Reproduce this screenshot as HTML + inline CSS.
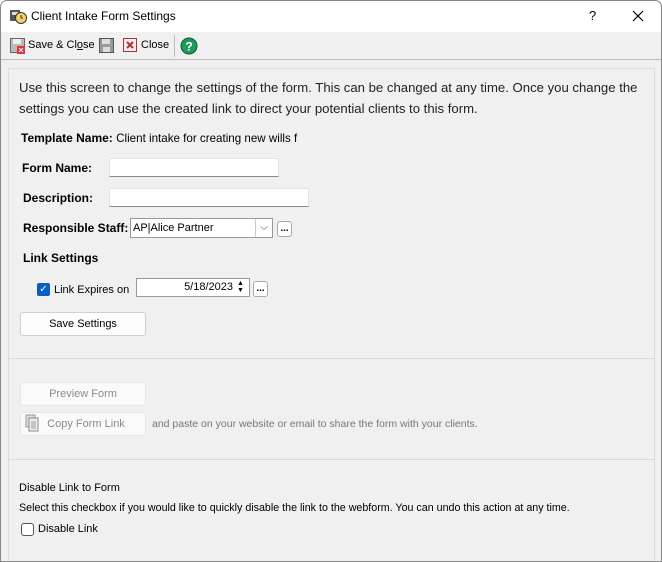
<!DOCTYPE html>
<html><head><style>
*{box-sizing:border-box;margin:0;padding:0}
body{width:662px;height:562px;overflow:hidden;background:#f0f0f0;font-family:"Liberation Sans",sans-serif;font-size:12px;color:#000;position:relative}
.a{position:absolute;white-space:nowrap}
.b{font-weight:bold;font-size:12px}
.inp{position:absolute;background:#fff;border:1px solid #e3e3e3;border-bottom-color:#8a8a8a}
.btn{position:absolute;background:#fdfdfd;border:1px solid #d0d0d0;border-radius:3px;text-align:center;font-size:11px}
.dis{color:#8a8a8a;background:#fafafa;border-color:#e5e5e5}
.dots{position:absolute;width:15px;height:16px;border:1px solid #aaa;border-radius:3px;background:#fff;font-size:10px;text-align:center;line-height:13px;font-weight:bold}
</style></head><body>
<div class="a" style="left:0;top:0;width:662px;height:32px;background:#fff"></div>
<div class="a" style="left:0;top:0;width:662px;height:562px;border:1px solid #888;border-radius:7px 7px 0 0;pointer-events:none;z-index:5"></div>
<svg class="a" style="left:9px;top:7px" width="18" height="18"><rect x="1" y="3" width="10" height="11" fill="#555"/><rect x="3" y="5" width="6" height="3" fill="#ddd"/><circle cx="12" cy="11" r="5.5" fill="#f3d36a" stroke="#333"/><path d="M12 8v3h2" stroke="#333" fill="none"/></svg>
<div class="a" style="left:31px;top:9px;font-size:12px">Client Intake Form Settings</div>
<div class="a" style="left:589px;top:8px;font-size:13px">?</div>
<svg class="a" style="left:632px;top:10px" width="12" height="12"><path d="M1 1l10 10M11 1l-10 10" stroke="#000" stroke-width="1.2"/></svg>
<div class="a" style="left:0;top:32px;width:662px;height:28px;background:#f0f0f0;border-bottom:1px solid #bbb"></div>
<svg class="a" style="left:10px;top:38px" width="16" height="16"><rect x="0.5" y="0.5" width="14" height="14" fill="#bbb" stroke="#666"/><rect x="3" y="1" width="8" height="5" fill="#eee"/><rect x="7" y="8" width="8" height="8" fill="#d33"/><path d="M9 10l4 4M13 10l-4 4" stroke="#fff"/></svg>
<div class="a" style="left:28px;top:39px;font-size:11px">Save &amp; Cl<u>o</u>se</div>
<svg class="a" style="left:99px;top:38px" width="16" height="16"><rect x="0.5" y="0.5" width="14" height="14" fill="#999" stroke="#555"/><rect x="3" y="1" width="8" height="5" fill="#ddd"/><rect x="4" y="9" width="7" height="5" fill="#ddd"/></svg>
<svg class="a" style="left:123px;top:38px" width="15" height="15"><rect x="0.5" y="0.5" width="13" height="13" fill="#eee" stroke="#a33"/><path d="M4 4l6 6M10 4l-6 6" stroke="#a33" stroke-width="2"/></svg>
<div class="a" style="left:141px;top:39px;font-size:11px">Close</div>
<div class="a" style="left:174px;top:35px;width:1px;height:22px;background:#bbb"></div>
<svg class="a" style="left:180px;top:37px" width="18" height="18"><circle cx="9" cy="9" r="8" fill="#1e9a5a" stroke="#0c5a33"/><text x="9" y="13.5" font-size="12" font-weight="bold" text-anchor="middle" fill="#fff" font-family="Liberation Sans">?</text></svg>
<div class="a" style="left:8px;top:68px;width:647px;height:494px;border:1px solid #dcdcdc;border-bottom:none"></div>
<div class="a" style="left:19px;top:77px;font-size:13.15px;line-height:21px;color:#222">Use this screen to change the settings of the form. This can be changed at any time. Once you change the<br>settings you can use the created link to direct your potential clients to this form.</div>
<div class="a" style="left:21px;top:131px"><span class="b">Template Name:</span> <span style="font-size:11.6px">Client intake for creating new wills f</span></div>
<div class="a b" style="left:22px;top:161px">Form Name:</div>
<div class="inp" style="left:109px;top:158px;width:170px;height:19px"></div>
<div class="a b" style="left:23px;top:191px">Description:</div>
<div class="inp" style="left:109px;top:188px;width:200px;height:19px"></div>
<div class="a b" style="left:23px;top:221px">Responsible Staff:</div>
<div class="inp" style="left:130px;top:218px;width:143px;height:20px;border-color:#999;font-size:11px;padding:3px 2px">AP|Alice Partner</div>
<div class="a" style="left:255px;top:219px;width:17px;height:18px;border-left:1px solid #ccc;font-size:10px;text-align:center;line-height:18px;color:#444">⌵</div>
<div class="dots" style="left:277px;top:221px">...</div>
<div class="a b" style="left:23px;top:251px">Link Settings</div>
<div class="a" style="left:37px;top:283px;width:13px;height:13px;background:#0a5fc4;border-radius:2px;color:#fff;font-size:10px;text-align:center;line-height:13px">✓</div>
<div class="a" style="left:54px;top:284px;font-size:11px">Link Expires on</div>
<div class="inp" style="left:136px;top:278px;width:114px;height:19px;border-color:#999;font-size:11px;text-align:right;padding:2px 16px 0 0">5/18/2023</div>
<div class="a" style="left:237px;top:280px;font-size:7px;line-height:7px">▲<br>▼</div>
<div class="dots" style="left:253px;top:281px">...</div>
<div class="btn" style="left:20px;top:312px;width:126px;height:24px;line-height:22px">Save Settings</div>
<div class="a" style="left:8px;top:358px;width:647px;height:1px;background:#dadada"></div>
<div class="btn dis" style="left:20px;top:382px;width:126px;height:24px;line-height:22px">Preview Form</div>
<div class="btn dis" style="left:20px;top:412px;width:126px;height:24px;line-height:22px;padding-left:6px">Copy Form Link</div>
<svg class="a" style="left:25px;top:414px" width="16" height="19"><rect x="1" y="1" width="9" height="12" fill="#ddd" stroke="#999"/><rect x="4" y="4" width="9" height="13" fill="#eee" stroke="#888"/><path d="M6 8h5M6 10h5M6 12h5M6 14h5" stroke="#999"/></svg>
<div class="a" style="left:152px;top:418px;font-size:10.5px;color:#777">and paste on your website or email to share the form with your clients.</div>
<div class="a" style="left:8px;top:459px;width:647px;height:1px;background:#dadada"></div>
<div class="a" style="left:19px;top:482px;font-size:11px">Disable Link to Form</div>
<div class="a" style="left:19px;top:502px;font-size:10.7px">Select this checkbox if you would like to quickly disable the link to the webform. You can undo this action at any time.</div>
<div class="a" style="left:21px;top:523px;width:13px;height:13px;border:1px solid #555;border-radius:3px;background:#fff"></div>
<div class="a" style="left:38px;top:523px;font-size:11px">Disable Link</div>
</body></html>
